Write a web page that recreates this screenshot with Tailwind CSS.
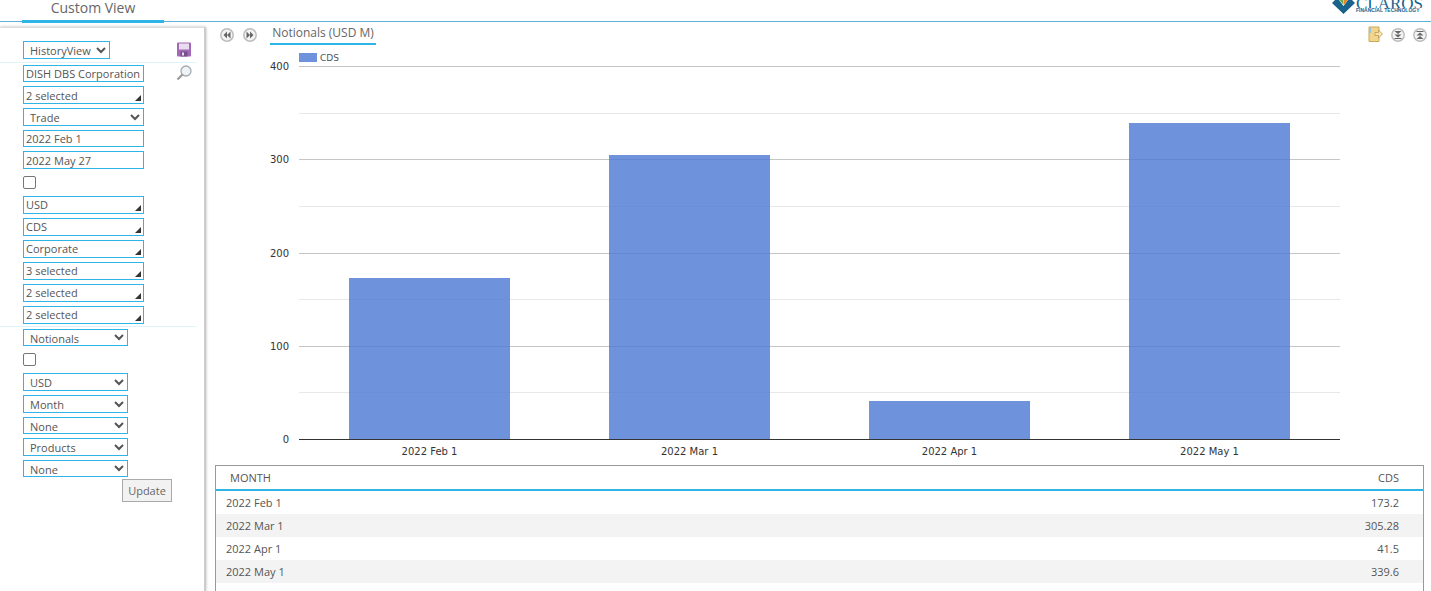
<!DOCTYPE html>
<html><head><meta charset="utf-8"><script src="https://cdn.jsdelivr.net/npm/@tailwindcss/browser@4"></script></head>
<body class="bg-white">
<div class="w-[1431px] h-[591px] overflow-hidden bg-white text-[#555] text-[11px] font-['Open_Sans',sans-serif]">
  <header class="h-[22px] border-b border-[#5fb0d6] flex justify-between relative">
    <div class="ml-[22px] w-[142px] h-[23px] border-b-[3px] border-[#2fb4e6] text-[14px] leading-[15px] text-center text-[#666]">Custom View</div>
    <div class="flex mr-[8px] h-[14px] overflow-hidden items-start">
      <svg width="24" height="14" viewBox="0 0 24 14"><path d="M0 3 L3 0 H7 L11.500 6 L16 0 H20 L23 3 L11.500 14 Z" fill="#17638c"/><path d="M7.500 0 H11.500 V5 Z" fill="#6aa84f"/><path d="M12 0 H16 L12 5 Z" fill="#e08a2c"/></svg>
      <div class="flex flex-col items-start w-[67px]">
        <div class="font-['Liberation_Serif',serif] text-[17px] leading-[8px] h-[8px] text-[#17638c] overflow-hidden">CLAROS</div>
        <div class="font-['Liberation_Sans',sans-serif] font-bold text-[5px] leading-[5px] text-[#17638c] whitespace-nowrap">FINANCIAL TECHNOLOGY</div>
      </div>
    </div>
  </header>
  <div class="flex h-[569px]">
    <aside class="w-[206px] mt-[5px] border-r-[2px] border-[#ccc] border-t border-t-[#ddd] shadow-[0_0_3px_#bbb] relative pt-[13px] shrink-0">
      <div class="flex justify-between items-start pl-[23px] pr-[13px] h-[18px]">
        <select class="w-[87px] h-[18px] border border-[#2fb4e6] text-[11px] px-[2px]"><option>HistoryView</option></select>
        <svg width="14" height="15" viewBox="0 0 14 15" class="mt-[1px]"><rect x="0" y="0.500" width="14" height="14" rx="1" fill="#a468b8"/><rect x="2" y="1.500" width="10" height="6" fill="#e8dcee"/><rect x="3.500" y="9.500" width="7" height="5" fill="#75508a"/><rect x="5" y="10.500" width="2" height="3" fill="#e8dcee"/></svg>
      </div>
      <div class="h-px bg-[#dff3fb] w-[196px] mt-[3px]"></div>
      <div class="relative pl-[23px] pt-[2px] flex flex-col gap-[4px]">
        <svg width="16" height="17" viewBox="0 0 16 17" class="absolute right-[12px] top-[2px]"><circle cx="10" cy="6" r="5" fill="#eef3f7" stroke="#a3acb1" stroke-width="1.300"/><path d="M6.500 9.500 L1.500 14.500" stroke="#9a9a9a" stroke-width="2.200"/></svg>
        <div class="w-[121px] h-[17px] border border-[#2fb4e6] pl-[2px] leading-[16px] whitespace-nowrap overflow-hidden">DISH DBS Corporation</div>
        <div class="w-[121px] h-[18px] border border-[#2fb4e6] pl-[2px] leading-[17px] relative">2 selected<span class="absolute right-[2px] bottom-[2px] w-0 h-0 border-l-[6px] border-l-transparent border-b-[6px] border-b-[#333]"></span></div>
        <select class="w-[121px] h-[18px] border border-[#2fb4e6] text-[11px] px-[2px]"><option>Trade</option></select>
        <div class="w-[121px] h-[17px] border border-[#2fb4e6] pl-[2px] leading-[15px]">2022 Feb 1</div>
        <div class="w-[121px] h-[18px] border border-[#2fb4e6] pl-[2px] leading-[17px]">2022 May 27</div>
        <div class="h-[19px] flex items-center"><span class="w-[13px] h-[13px] border border-[#767676] rounded-[2px] bg-white"></span></div>
        <div class="w-[121px] h-[18px] border border-[#2fb4e6] pl-[2px] leading-[16px] relative">USD<span class="absolute right-[2px] bottom-[2px] w-0 h-0 border-l-[6px] border-l-transparent border-b-[6px] border-b-[#333]"></span></div>
        <div class="w-[121px] h-[18px] border border-[#2fb4e6] pl-[2px] leading-[16px] relative">CDS<span class="absolute right-[2px] bottom-[2px] w-0 h-0 border-l-[6px] border-l-transparent border-b-[6px] border-b-[#333]"></span></div>
        <div class="w-[121px] h-[18px] border border-[#2fb4e6] pl-[2px] leading-[16px] relative">Corporate<span class="absolute right-[2px] bottom-[2px] w-0 h-0 border-l-[6px] border-l-transparent border-b-[6px] border-b-[#333]"></span></div>
        <div class="w-[121px] h-[18px] border border-[#2fb4e6] pl-[2px] leading-[16px] relative">3 selected<span class="absolute right-[2px] bottom-[2px] w-0 h-0 border-l-[6px] border-l-transparent border-b-[6px] border-b-[#333]"></span></div>
        <div class="w-[121px] h-[18px] border border-[#2fb4e6] pl-[2px] leading-[16px] relative">2 selected<span class="absolute right-[2px] bottom-[2px] w-0 h-0 border-l-[6px] border-l-transparent border-b-[6px] border-b-[#333]"></span></div>
        <div class="w-[121px] h-[18px] border border-[#2fb4e6] pl-[2px] leading-[16px] relative">2 selected<span class="absolute right-[2px] bottom-[2px] w-0 h-0 border-l-[6px] border-l-transparent border-b-[6px] border-b-[#333]"></span></div>
      </div>
      <div class="h-px bg-[#dff3fb] w-[196px] mt-[2px]"></div>
      <div class="pl-[23px] pt-[2px] flex flex-col gap-[4px]">
        <select class="w-[105px] h-[17px] border border-[#2fb4e6] text-[11px] px-[2px]"><option>Notionals</option></select>
        <div class="h-[19px] flex items-center"><span class="w-[13px] h-[13px] border border-[#767676] rounded-[2px] bg-white"></span></div>
        <select class="w-[105px] h-[18px] border border-[#2fb4e6] text-[11px] px-[2px]"><option>USD</option></select>
        <select class="w-[105px] h-[18px] border border-[#2fb4e6] text-[11px] px-[2px]"><option>Month</option></select>
        <select class="w-[105px] h-[17px] border border-[#2fb4e6] text-[11px] px-[2px]"><option>None</option></select>
        <select class="w-[105px] h-[18px] border border-[#2fb4e6] text-[11px] px-[2px]"><option>Products</option></select>
        <select class="w-[105px] h-[17px] border border-[#2fb4e6] text-[11px] px-[2px]"><option>None</option></select>
      </div>
      <button class="block ml-[122px] mt-[2px] w-[50px] h-[23px] pt-[1px] border border-[#aaa] bg-[#f2f2f2] text-[11px] text-[#666]">Update</button>
    </aside>
    <main class="flex-1 min-w-0 flex flex-col">
      <div class="h-[24px] flex items-start relative">
        <div class="flex gap-[9px] ml-[14px] mt-[6px]">
          <svg width="14" height="14" viewBox="0 0 14 14"><circle cx="7" cy="7" r="6.200" fill="#f4f4f4" stroke="#bdbdbd" stroke-width="1.500"/><path d="M7 3.500 L3.500 7 L7 10.500 Z M10.500 3.500 L7 7 L10.500 10.500 Z" fill="#666"/></svg>
          <svg width="14" height="14" viewBox="0 0 14 14"><circle cx="7" cy="7" r="6.200" fill="#f4f4f4" stroke="#bdbdbd" stroke-width="1.500"/><path d="M3.500 3.500 L7 7 L3.500 10.500 Z M7 3.500 L10.500 7 L7 10.500 Z" fill="#666"/></svg>
        </div>
        <div class="ml-[13px] w-[106px] h-[23px] border-b-[2px] border-[#2fb4e6] text-center text-[12px] leading-[21px] text-[#666]">Notionals (USD M)</div>
        <div class="ml-auto flex items-center gap-[8px] mr-[4px] mt-[4px]">
          <svg width="15" height="17" viewBox="0 0 15 17"><path d="M1 1 H11 V15.500 H1 Z" fill="#f1d58b" stroke="#cda95a"/><rect x="1.500" y="2" width="1.500" height="5" fill="#8fc3e8"/><path d="M7 6.500 H10.500 V4 L14.500 8 L10.500 12 V9.500 H7 Z" fill="#f6e3ab" stroke="#b98f45" stroke-width="0.700"/></svg>
          <svg width="14" height="14" viewBox="0 0 14 14"><circle cx="7" cy="7" r="6.200" fill="#f4f4f4" stroke="#bdbdbd" stroke-width="1.500"/><path d="M3.500 3 L7 6 L10.500 3 Z M3.500 6.500 L7 9.500 L10.500 6.500 Z" fill="#666"/><rect x="3.500" y="10" width="7" height="1" fill="#666"/></svg>
          <svg width="14" height="14" viewBox="0 0 14 14"><circle cx="7" cy="7" r="6.200" fill="#f4f4f4" stroke="#bdbdbd" stroke-width="1.500"/><path d="M3.500 7.500 L7 4.500 L10.500 7.500 Z M3.500 11 L7 8 L10.500 11 Z" fill="#666"/><rect x="3.500" y="3" width="7" height="1" fill="#666"/></svg>
        </div>
      </div>
      <svg width="1225" height="419" viewBox="206 46 1225 419" class="block font-['DejaVu_Sans',sans-serif]">
        <g stroke="#e8e8e8" stroke-width="1"><path d="M299 113.500 H1340 M299 206.500 H1340 M299 299.500 H1340 M299 392.500 H1340"/></g>
        <g stroke="#c6c6c6" stroke-width="1"><path d="M299 66.500 H1340 M299 159.500 H1340 M299 253.500 H1340 M299 346.500 H1340"/></g>
        <g fill="#4a77d2" fill-opacity="0.8">
          <rect x="349" y="278" width="161" height="161"/><rect x="609" y="155" width="161" height="284"/><rect x="869" y="401" width="161" height="38"/><rect x="1129" y="123" width="161" height="316"/>
          <rect x="299" y="53" width="18" height="9"/>
        </g>
        <path d="M299 439.500 H1340" stroke="#333"/>
        <g font-size="10" fill="#333" text-anchor="end"><text x="289" y="70">400</text><text x="289" y="163">300</text><text x="289" y="257">200</text><text x="289" y="350">100</text><text x="289" y="443">0</text></g>
        <text x="320" y="61" font-size="9" fill="#555">CDS</text>
        <g font-size="10" fill="#333" text-anchor="middle"><text x="429.500" y="455">2022 Feb 1</text><text x="689.500" y="455">2022 Mar 1</text><text x="949.500" y="455">2022 Apr 1</text><text x="1209.500" y="455">2022 May 1</text></g>
      </svg>
      <div class="ml-[9px] w-[1209px] flex-1 border border-b-0 border-[#999]">
        <div class="h-[23px] border-b-[2px] border-[#2fb4e6] box-content flex justify-between pl-[14px] pr-[24px] leading-[24px]"><span>MONTH</span><span>CDS</span></div>
        <div class="h-[23px] flex justify-between px-[10px] pr-[24px] leading-[23px]"><span>2022 Feb 1</span><span>173.2</span></div>
        <div class="h-[23px] bg-[#f3f3f3] flex justify-between px-[10px] pr-[24px] leading-[23px]"><span>2022 Mar 1</span><span>305.28</span></div>
        <div class="h-[23px] flex justify-between px-[10px] pr-[24px] leading-[23px]"><span>2022 Apr 1</span><span>41.5</span></div>
        <div class="h-[23px] bg-[#f3f3f3] flex justify-between px-[10px] pr-[24px] leading-[23px]"><span>2022 May 1</span><span>339.6</span></div>
      </div>
    </main>
  </div>
</div>
</body></html>
